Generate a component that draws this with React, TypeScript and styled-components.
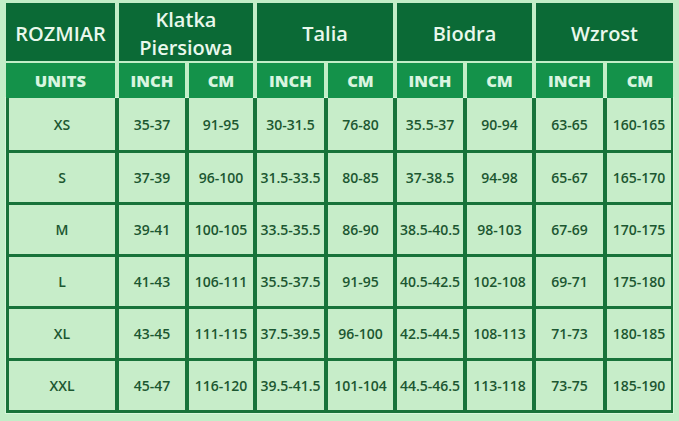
import React from "react";
import styled, { createGlobalStyle } from "styled-components";

const Global = createGlobalStyle`
  html, body { margin: 0; padding: 0; background: #c3eec8; }
  body { font-family: "Open Sans", "Liberation Sans", sans-serif; }
`;

const COLS = "109px 66px 64px 67px 65px 66px 65px 67px 66px";

const Page = styled.div`
  width: 679px;
  height: 421px;
  box-sizing: border-box;
  padding: 3px 6px 0 6px;
  background: #c3eec8;
`;

const Header = styled.div`
  display: grid;
  grid-template-columns: ${COLS};
  grid-template-rows: 58px 35px;
  column-gap: 4px;
  row-gap: 2px;
`;

const GroupCell = styled.div<{ $span?: number }>`
  grid-column: span ${(p) => p.$span ?? 1};
  background: #0b6a36;
  color: #e9f8ec;
  font-size: 20px;
  font-weight: 600;
  line-height: 28px;
  display: flex;
  align-items: center;
  justify-content: center;
  text-align: center;
  padding-top: 4px;
  box-sizing: border-box;
`;

const UnitCell = styled.div`
  background: #14924a;
  color: #d9f5e0;
  font-size: 16.5px;
  font-weight: 800;
  display: flex;
  align-items: center;
  justify-content: center;
`;

const Body = styled.div`
  display: grid;
  grid-template-columns: 106px 66px 64px 67px 65px 66px 65px 67px 64px;
  grid-template-rows: 52px repeat(5, 49px);
  column-gap: 4px;
  row-gap: 3px;
  padding: 0 3px 3px 3px;
  background: #18733a;
  width: 667px;
  box-sizing: border-box;
  box-shadow: 0 0 0 1px #d6f7da;
`;

const DataCell = styled.div`
  background: #c7edc9;
  color: #1c5731;
  font-size: 14px;
  font-weight: 600;
  display: flex;
  align-items: center;
  justify-content: center;
`;

const groups = [
  { label: "ROZMIAR", span: 1 },
  { label: "Klatka\nPiersiowa", span: 2 },
  { label: "Talia", span: 2 },
  { label: "Biodra", span: 2 },
  { label: "Wzrost", span: 2 },
];

const units = ["UNITS", "INCH", "CM", "INCH", "CM", "INCH", "CM", "INCH", "CM"];

const rows = [
  ["XS", "35-37", "91-95", "30-31.5", "76-80", "35.5-37", "90-94", "63-65", "160-165"],
  ["S", "37-39", "96-100", "31.5-33.5", "80-85", "37-38.5", "94-98", "65-67", "165-170"],
  ["M", "39-41", "100-105", "33.5-35.5", "86-90", "38.5-40.5", "98-103", "67-69", "170-175"],
  ["L", "41-43", "106-111", "35.5-37.5", "91-95", "40.5-42.5", "102-108", "69-71", "175-180"],
  ["XL", "43-45", "111-115", "37.5-39.5", "96-100", "42.5-44.5", "108-113", "71-73", "180-185"],
  ["XXL", "45-47", "116-120", "39.5-41.5", "101-104", "44.5-46.5", "113-118", "73-75", "185-190"],
];

export default function App() {
  return (
    <>
      <Global />
      <Page>
        <Header>
          {groups.map((g) => (
            <GroupCell key={g.label} $span={g.span}>
              <span>
                {g.label.split("\n").map((l, i) => (
                  <React.Fragment key={i}>
                    {i > 0 && <br />}
                    {l}
                  </React.Fragment>
                ))}
              </span>
            </GroupCell>
          ))}
          {units.map((u, i) => (
            <UnitCell key={i}>{u}</UnitCell>
          ))}
        </Header>
        <Body>
          {rows.map((r, ri) =>
            r.map((v, ci) => <DataCell key={`${ri}-${ci}`}>{v}</DataCell>)
          )}
        </Body>
      </Page>
    </>
  );
}
